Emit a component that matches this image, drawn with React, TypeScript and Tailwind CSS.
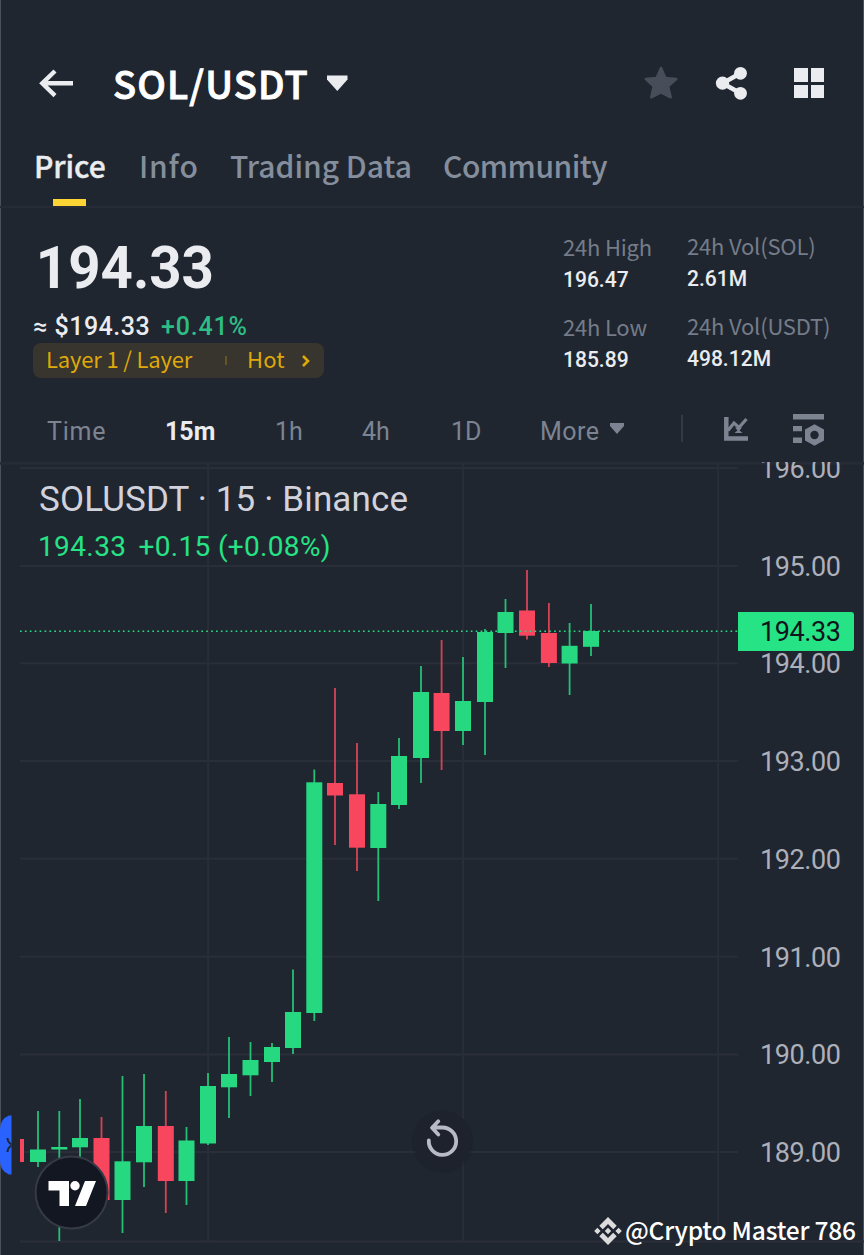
import React from "react";

type Candle = [x: number, high: number, top: number, bottom: number, low: number, up: boolean];

const CANDLES: Candle[] = [
  [38, 1111, 1149.5, 1162, 1167, true],
  [59.3, 1111, 1147, 1149.5, 1241, true],
  [80, 1099, 1138, 1147.3, 1170, true],
  [101.5, 1117, 1138, 1200, 1212, false],
  [122.5, 1076, 1161.3, 1200, 1233, true],
  [144, 1074, 1126, 1162.3, 1187, true],
  [165.8, 1091, 1126, 1181, 1213, false],
  [186.5, 1127, 1140.5, 1181, 1205, true],
  [208, 1073, 1086, 1143.5, 1145, true],
  [229, 1037, 1074, 1087.3, 1118, true],
  [250.5, 1042, 1060, 1075.3, 1096, true],
  [272, 1043, 1047, 1062, 1082, true],
  [293, 969.5, 1012, 1048, 1054, true],
  [314.3, 769.5, 782.3, 1013, 1021, true],
  [335, 688, 783, 795.5, 845, false],
  [357, 743, 794.3, 847.7, 871, false],
  [378.3, 792, 804, 848, 901, true],
  [399, 738, 756, 805, 809, true],
  [421, 666, 692, 758, 783, true],
  [441.6, 640, 693, 731, 770, false],
  [463, 657, 701, 731, 745, true],
  [485, 629, 632, 702, 755, true],
  [505.5, 599, 612, 633, 668, true],
  [527, 570, 610.5, 635.7, 639.5, false],
  [548.9, 603, 633, 663, 667, false],
  [569.6, 623, 645.8, 663.5, 695, true],
  [591, 604, 631, 646.8, 656, true],
];

const H_LINES = [468, 566, 663.3, 761, 858.6, 956.7, 1054.5, 1152];
const V_LINES = [208, 463, 718];
const UP = "#26d980";
const DOWN = "#f7465d";

function Stat({ label, value }: { label: string; value: string }) {
  return (
    <div className="flex flex-col whitespace-nowrap">
      <span className="h-[33px] font-['Noto_Sans_CJK_SC',sans-serif] text-[22px] leading-[29px] tracking-[-0.2px] text-[#757c89]">{label}</span>
      <span className="h-[31px] origin-left scale-x-[0.935] font-[Roboto,sans-serif] text-[22.5px] font-medium leading-[29px] text-[#eaecef]">
        {value}
      </span>
    </div>
  );
}

function Header() {
  return (
    <header className="flex h-[124px] items-start pl-[39px] pt-[60px]">
      <svg className="mt-[7px] h-8 w-[35px]" viewBox="0 0 35 32" fill="none" stroke="#eaecef" strokeWidth="4.400">
        <path d="M3 16.300H34M16 4 3.300 16.300 16 28.600" />
      </svg>
      <h1 className="-mt-px ml-[39px] w-[214px] whitespace-nowrap font-['Noto_Sans_CJK_SC',sans-serif] text-[38px] font-medium leading-[48px] tracking-[1.1px] text-white [-webkit-text-stroke:0.9px_white]">
        SOL/USDT
      </h1>
      <svg className="mt-[14px] h-[18px] w-[22px]" viewBox="0 0 22 18" fill="#eaecef">
        <path d="M0 1.500H20.500V5.500L10.300 17 0 5.500Z" />
      </svg>
      <svg className="ml-[294px] mt-[5px] h-9 w-9" viewBox="0 0 36 36" fill="#474d59" stroke="#474d59" strokeWidth="2.500" strokeLinejoin="round">
        <path d="M18 3l4.400 9.900 10.800 1.200-8.100 7.200 2.600 11L18 27.400 8.300 32.300l2.400-11L2.800 14.100l10.800-1.200z" />
      </svg>
      <svg className="ml-[35px] mt-1 h-9 w-9" viewBox="0 0 36 36" fill="#eaecef" stroke="#eaecef">
        <path d="M26.500 9.300 8.500 19.300l18 10" fill="none" strokeWidth="4.500" />
        <circle cx="26.500" cy="9.300" r="6.400" stroke="none" />
        <circle cx="8.500" cy="19.200" r="6.600" stroke="none" />
        <circle cx="26.500" cy="29.300" r="6.400" stroke="none" />
      </svg>
      <div className="ml-[44px] mt-[8px] grid grid-cols-2 gap-[3px]">
        <i className="h-[13.5px] w-[13.5px] bg-[#eaecef]" />
        <i className="h-[13.5px] w-[13.5px] bg-[#eaecef]" />
        <i className="h-[13.5px] w-[13.5px] bg-[#eaecef]" />
        <i className="h-[13.5px] w-[13.5px] bg-[#eaecef]" />
      </div>
    </header>
  );
}

function Tabs() {
  return (
    <nav className="flex h-[84px] border-b-2 border-[#272b36] pl-[34px] pt-[18px] font-['Noto_Sans_CJK_SC',sans-serif] text-[30px] font-medium leading-[46px] text-[#848e9c]">
      <div className="flex w-[105px] flex-col whitespace-nowrap tracking-[-0.1px] text-[#eaecef]">
        <span className="h-[58px] [-webkit-text-stroke:0.4px_#eaecef]">Price</span>
        <i className="ml-[19px] h-[7px] w-[33px] shrink-0 bg-[#fcd535]" />
      </div>
      <span className="w-[91px] tracking-[0.8px]">Info</span>
      <span className="w-[213px] whitespace-nowrap">Trading Data</span>
      <span className="whitespace-nowrap tracking-[-0.5px]">Community</span>
    </nav>
  );
}

function Summary() {
  return (
    <section className="flex h-[184px] pl-[33px]">
      <div className="w-[530px] font-[Roboto,sans-serif]">
        <div className="mt-6 h-[72px] origin-left scale-x-[0.94] whitespace-nowrap pl-[3px] text-[60px] font-bold leading-[72px] text-[#eaecef]">194.33</div>
        <div className="mt-[7px] flex h-8 whitespace-nowrap text-[25px] font-medium leading-8 tracking-[0.5px] text-[#eaecef]">
          <span className="w-[128px]">≈ $194.33</span>
          <span className="tracking-[0.8px] text-[#2ebd85]">+0.41%</span>
        </div>
        <div className="flex h-[35px] w-[291px] items-center whitespace-nowrap rounded-lg bg-[#37352d] pl-[13px] font-['Noto_Sans_CJK_SC',sans-serif] text-[22px] leading-[30px] text-[#dfa90a]">
          <span className="h-[35px] w-[179px] tracking-[-0.15px]">Layer 1 / Layer</span>
          <i className="h-[9px] w-[2px] bg-[#665523]" />
          <span className="ml-5 h-[35px] w-[55px] tracking-[0.2px]">Hot</span>
          <svg className="h-3 w-2" viewBox="0 0 8 12" fill="none" stroke="#dfa90a" strokeWidth="2.600">
            <path d="M1 1 6 6 1 11" />
          </svg>
        </div>
      </div>
      <div className="flex w-[124px] flex-col gap-4 pt-6">
        <Stat label="24h High" value="196.47" />
        <Stat label="24h Low" value="185.89" />
      </div>
      <div className="flex flex-col gap-4 pt-[23px]">
        <Stat label="24h Vol(SOL)" value="2.61M" />
        <Stat label="24h Vol(USDT)" value="498.12M" />
      </div>
    </section>
  );
}

function Intervals() {
  return (
    <div className="flex h-[70px] whitespace-nowrap pl-[47px] pt-[22px] font-[Roboto,sans-serif] text-[25px] leading-9 text-[#7c8492]">
      <span className="w-[118px] tracking-[0.8px]">Time</span>
      <span className="w-[110px] font-bold text-[#eaecef]">15m</span>
      <span className="w-[87px]">1h</span>
      <span className="w-[89px]">4h</span>
      <span className="w-[89px]">1D</span>
      <span className="w-[70px] tracking-[0.5px]">More</span>
      <svg className="mt-[9px] h-[12px] w-[14px]" viewBox="0 0 14 12" fill="#7c8492">
        <path d="M0 0H14V3L7 11 0 3Z" />
      </svg>
      <i className="ml-[57px] mt-[1px] h-[27px] w-[2px] bg-[#333a45]" />
      <svg className="ml-[41px] mt-[1px] h-[27px] w-6" viewBox="0 0 24 27" fill="none" stroke="#7c8492">
        <path d="M2.300 2V23.500H24" strokeWidth="4.500" />
        <path d="M4 15.500l6-7.500 5 4.500L22.500 4" strokeWidth="3.200" />
        <path d="M11 12.500h7l-2.500 3 3 2.500h-8l3-2.500z" fill="#7c8492" stroke="none" />
      </svg>
      <svg className="ml-[45px] mt-0 h-8 w-[31px]" viewBox="0 0 31 32" fill="#7c8492">
        <path d="M0 0H31V5.500H0zM0 12H9V17.300H0zM0 23.500H9V29H0z" />
        <path fillRule="evenodd" d="M21.500 10.300 31 15.500V26.500L21.500 31.700 12 26.500V15.500zM21.500 16.800a4.200 4.200 0 1 0 0 8.400a4.200 4.200 0 1 0 0-8.400z" />
      </svg>
    </div>
  );
}

function Chart() {
  return (
    <svg className="block h-[793px] w-full" viewBox="0 462 864 793" fontFamily="Roboto, sans-serif">
      <path d="M0 463.300H864" stroke="#272b36" strokeWidth="3" />
      <g stroke="#2a2e38" strokeWidth="1.800">
        {H_LINES.map((y) => (
          <path key={y} d={`M20 ${y}H738`} />
        ))}
        {V_LINES.map((x) => (
          <path key={x} d={`M${x} 462V1241`} />
        ))}
        <path d="M20 1241.500H864" />
      </g>
      <rect x="20" y="1139" width="4" height="23" fill={DOWN} />
      {CANDLES.map(([x, high, top, bottom, low, up]) => (
        <g key={x} fill={up ? UP : DOWN}>
          <rect x={x - 0.9} y={high} width="1.800" height={low - high} opacity="0.850" />
          <rect x={x - 8} y={top} width="16" height={bottom - top} />
        </g>
      ))}
      <path d="M20 631.300H738" stroke={UP} strokeWidth="1.500" strokeDasharray="1.700 3.200" />
      <g fill="#adb0ba" fontSize="27">
        {[196, 195, 194, 193, 192, 191, 190, 189].map((p, i) => (
          <text key={p} x="760" y={478 + i * 97.7} textLength="81">
            {p}.00
          </text>
        ))}
      </g>
      <path d="M738 612H851q3 0 3 3v33q0 3-3 3H738z" fill="#26e386" />
      <text x="760" y="641" fontSize="27" textLength="81" fill="#10151c">194.33</text>
      <text x="39" y="510.500" fontSize="35" textLength="369" fill="#d1d2dc">SOLUSDT · 15 · Binance</text>
      <g fill="#26e386" fontSize="28">
        <text x="38" y="556" textLength="88">194.33</text>
        <text x="138.500" y="556" textLength="192">+0.15 (+0.08%)</text>
      </g>
      <path d="M11.500 1115.500V1174.500H9Q0 1171 0 1160V1130Q0 1119 9 1115.500z" fill="#2962ff" />
      <path d="M7.500 1138q0 4 4 6.500M7.500 1152q0-4 4-6.500" fill="none" stroke="#1e2630" strokeWidth="2" />
      <circle cx="71.600" cy="1192.500" r="36" fill="#131722" stroke="#363a45" strokeWidth="2" />
      <g fill="#fff">
        <path d="M48.500 1181H69V1206H59.500V1190.500H48.500z" />
        <circle cx="75" cy="1185.800" r="4.700" />
        <path d="M85 1181H96L86 1206H75z" />
      </g>
      <circle cx="442.500" cy="1142" r="31" fill="#1b2029" opacity="0.350" />
      <circle cx="442.500" cy="1140" r="29.500" fill="#1e222d" />
      <path
        d="M428.800 1140.500A13.700 13.700 0 1 0 442.500 1127.500H432.500M438.300 1121.300 432 1127.800 438.300 1134.500"
        fill="none"
        stroke="#b8bac5"
        strokeWidth="3.800"
        strokeLinecap="round"
        strokeLinejoin="round"
      />
      <g transform="translate(608 1231)" fill="#dcdcdc">
        <path d="M-8.700-5.200 0-14 8.700-5.200 5.200-1.800 0-7-5.200-1.800zM-8.700 5.200 0 14 8.700 5.200 5.200 1.800 0 7-5.200 1.800z" />
        <path d="M-13.800 0-10.600-3.200-7.400 0-10.600 3.200zM13.800 0 10.600-3.200 7.400 0 10.600 3.200zM-3.200 0 0-3.200 3.200 0 0 3.200z" />
      </g>
      <text x="625" y="1240" fontSize="24.500" textLength="231" fill="#fff" fontWeight="500" fontFamily="Noto Sans CJK SC, sans-serif">
        @Crypto Master 786
      </text>
    </svg>
  );
}

export default function App() {
  return (
    <main className="h-[1255px] w-[864px] overflow-hidden bg-[#202630] shadow-[inset_1px_0_#4b5059,inset_-1px_0_#4b5059]">
      <Header />
      <Tabs />
      <Summary />
      <Intervals />
      <Chart />
    </main>
  );
}
